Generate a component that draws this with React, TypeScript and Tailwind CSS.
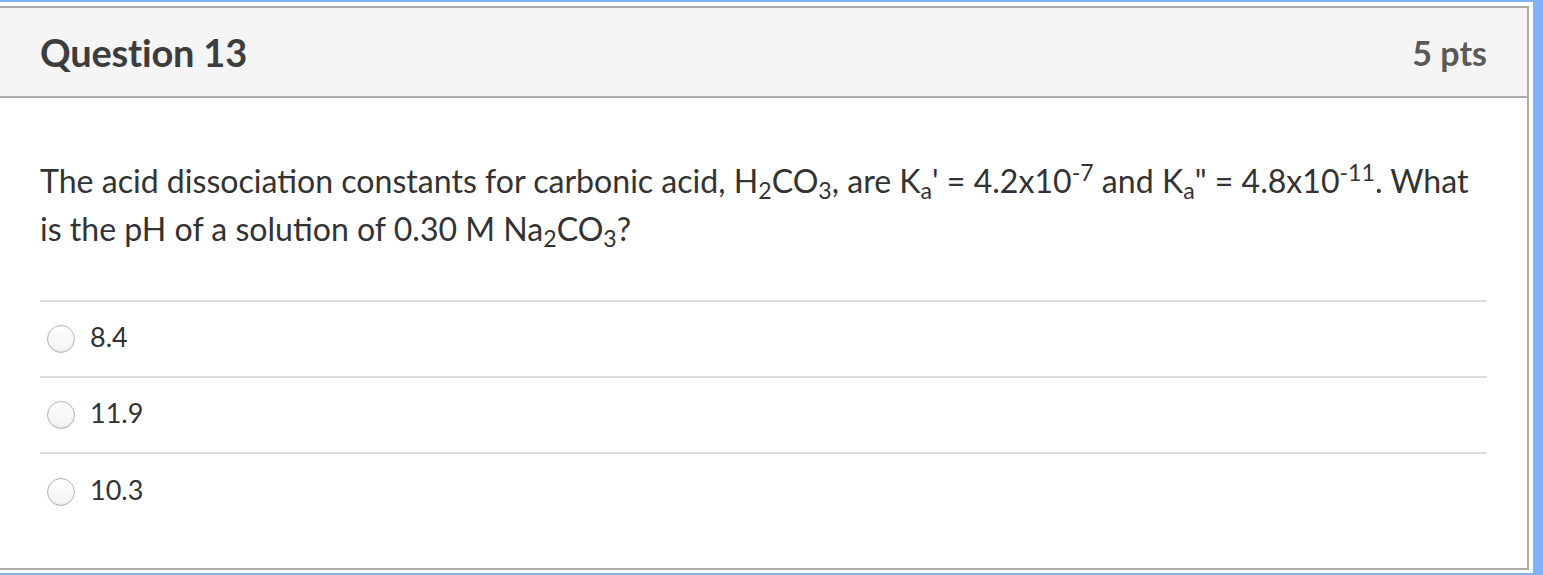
import React from 'react'

const options = ['8.4', '11.9', '10.3']

export default function App() {
    return (
        <div className="w-[1543px] h-[575px] overflow-hidden bg-white" style={{ fontFamily: 'Lato, "Open Sans", sans-serif' }}>
            <div className="h-full border-t-2 border-r-[10px] border-b-2 border-[#80b3f5] pt-[4px] pr-[4px] pb-[3px]">
                <div className="h-full border-t-2 border-r-2 border-b-2 border-[#aaaaaa] flex flex-col">
                    {/* HEADER */}
                    <div className="h-[90px] shrink-0 bg-[#f5f5f5] border-b-2 border-[#aaaaaa] flex items-center justify-between px-[40px]">
                        <h2 className="text-[38px] font-bold text-[#3d3d3d] tracking-[-0.2px]">Question 13</h2>
                        <span className="text-[34px] font-bold text-[#5a5a5a]">5 pts</span>
                    </div>

                    {/* BODY */}
                    <div className="px-[40px] pt-[59px]">
                        <p className="text-[32.1px] leading-[48px] text-[#333333]">
                            The acid dissociation constants for carbonic acid, H<sub className="text-[0.72em]">2</sub>CO<sub className="text-[0.72em]">3</sub>, are K<sub className="text-[0.72em]">a</sub>' = 4.2x10<sup className="text-[0.72em]">-7</sup> and K<sub className="text-[0.72em]">a</sub>" = 4.8x10<sup className="text-[0.72em]">-11</sup>. What is the pH of a solution of 0.30 M Na<sub className="text-[0.72em]">2</sub>CO<sub className="text-[0.72em]">3</sub>?
                        </p>

                        <div className="mt-[47px] border-t-2 border-[#dddddd]">
                            {options.map((opt, i) => (
                                <div
                                    key={opt}
                                    className={`h-[76px] flex items-center gap-[15px] pl-[7px] ${i < options.length - 1 ? 'border-b-2 border-[#dddddd]' : ''}`}
                                >
                                    <span className="w-[28px] h-[28px] rounded-full border border-[#b5b5b5] bg-gradient-to-b from-[#ffffff] to-[#f2f2f2] shadow-[inset_0_-1px_1px_rgba(0,0,0,0.08)]" />
                                    <span className="text-[27px] text-[#333333] pb-[4px]">{opt}</span>
                                </div>
                            ))}
                        </div>
                    </div>
                </div>
            </div>
        </div>
    )
}
